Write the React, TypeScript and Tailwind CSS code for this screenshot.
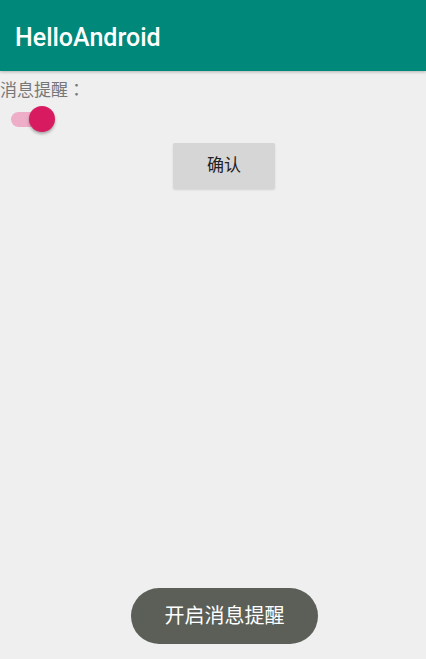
export default function App() {
  return (
    <div
      className="flex h-[659px] w-[426px] flex-col overflow-hidden bg-[#efefef]"
      style={{ fontFamily: 'Roboto, "Noto Sans CJK SC", sans-serif' }}
    >
      <header className="relative z-10 flex h-[71px] shrink-0 items-center bg-[#00887a] px-[15px] pt-[4px] shadow-[0_1px_3px_rgba(0,0,0,0.25)]">
        <h1 className="text-[25px] font-medium text-white">HelloAndroid</h1>
      </header>

      <main className="relative flex flex-1 flex-col">
        <p
          className="mt-[7px] text-[17px] leading-[22px] text-[#777]"
          style={{ fontFamily: '"Noto Sans CJK JP", sans-serif' }}
        >
          消息提醒：
        </p>

        <div className="relative ml-[11px] mt-[6px] h-[26px] w-[44px]">
          <div className="absolute left-0 top-[6px] h-[15px] w-[37px] rounded-full bg-[#eeaec8]" />
          <div className="absolute right-0 top-0 h-[26px] w-[26px] rounded-full bg-[#d81b60] shadow-[0_2px_3px_rgba(0,0,0,0.3)]" />
        </div>

        <div className="mt-[11px] flex justify-center pl-[22px]">
          <button className="h-[46px] w-[102px] rounded-[2px] bg-[#d6d6d6] text-[17px] text-[#222] shadow-[0_1px_2px_rgba(0,0,0,0.12)]">
            确认
          </button>
        </div>

        <div className="absolute bottom-[15px] left-[131px] flex h-[56px] w-[187px] items-center justify-center rounded-full bg-[#5b5f58]">
          <span className="text-[20px] text-white">开启消息提醒</span>
        </div>
      </main>
    </div>
  )
}
